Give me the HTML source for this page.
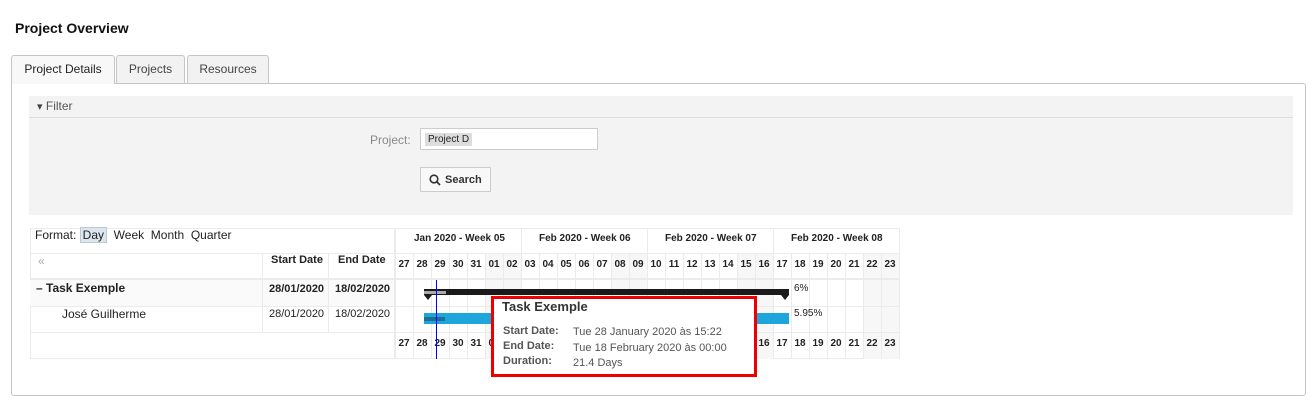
<!DOCTYPE html>
<html><head><meta charset="utf-8"><style>
body{margin:0;width:1316px;height:411px;background:#fff;font-family:"Liberation Sans",Arial,sans-serif;position:relative;overflow:hidden;color:#222}
.a{position:absolute}
.tab{position:absolute;top:55px;height:28px;border:1px solid #c5c5c5;border-bottom:none;border-radius:3px 3px 0 0;background:#f2f2f2;font-size:12px;color:#444;text-align:center;line-height:27px;box-sizing:border-box}
.d{position:absolute;width:18px;text-align:center;font-size:10px;font-weight:bold;color:#222}
.vl{position:absolute;width:1px;background:#ebebeb}
.hl{position:absolute;height:1px;background:#ebebeb}
.we{position:absolute;width:36px;background:#f7f7f7}
</style></head><body>
<div class="a" style="left:15px;top:20px;font-size:14px;font-weight:bold;color:#111">Project Overview</div>
<div class="a" style="left:11px;top:83px;width:1293px;height:311px;border:1px solid #c5c5c5;border-radius:0 3px 3px 3px"></div>
<div class="tab" style="left:11px;width:104px;height:29px;background:#f8f8f8;color:#222">Project Details</div>
<div class="tab" style="left:116px;width:69px">Projects</div>
<div class="tab" style="left:187px;width:82px">Resources</div>
<div class="a" style="left:29px;top:96px;width:1264px;height:119px;background:#f3f3f3"></div>
<div class="a" style="left:29px;top:117px;width:1264px;height:1px;background:#ddd"></div>
<div class="a" style="left:37px;top:99px;font-size:12px;color:#555"><span style="font-size:11px;color:#444">▾</span> Filter</div>
<div class="a" style="left:370px;top:133px;font-size:12px;color:#888">Project:</div>
<div class="a" style="left:420px;top:128px;width:176px;height:20px;border:1px solid #ccc;background:#fff"><span style="position:absolute;left:4px;top:4px;background:#ddd;font-size:10px;padding:1px 3px;color:#222">Project D</span></div>
<div class="a" style="left:420px;top:167px;width:69px;height:23px;border:1px solid #ccc;background:#f8f8f8;font-size:11px;font-weight:bold;line-height:24px;color:#333"><svg width="12" height="12" style="position:absolute;left:8px;top:6px"><circle cx="5" cy="5" r="3.8" fill="none" stroke="#333" stroke-width="1.6"/><line x1="7.6" y1="7.6" x2="11" y2="11" stroke="#333" stroke-width="1.8"/></svg><span style="position:absolute;left:24px">Search</span></div>

<div class="a" style="left:30px;top:228px;width:870px;height:131px;border:1px solid #ebebeb;box-sizing:border-box"></div>
<div class="a" style="left:30px;top:280px;width:365px;height:26px;background:#fafafa"></div>
<div class="we" style="left:485px;top:253px;height:106px"></div>
<div class="we" style="left:611px;top:253px;height:106px"></div>
<div class="we" style="left:737px;top:253px;height:106px"></div>
<div class="we" style="left:863px;top:253px;height:106px"></div>
<div class="hl" style="left:30px;top:253px;width:870px"></div>
<div class="hl" style="left:30px;top:278px;width:870px;height:2px"></div>
<div class="hl" style="left:30px;top:306px;width:870px"></div>
<div class="hl" style="left:30px;top:332px;width:870px"></div>
<div class="vl" style="left:262px;top:253px;height:79px"></div>
<div class="vl" style="left:328px;top:253px;height:79px"></div>
<div class="vl" style="left:394px;top:228px;height:131px;width:2px"></div>
<div class="vl" style="left:521px;top:228px;height:25px"></div>
<div class="vl" style="left:647px;top:228px;height:25px"></div>
<div class="vl" style="left:773px;top:228px;height:25px"></div>
<div id="cols"></div>
<div class="a" style="left:35px;top:228px;font-size:12px;color:#222">Format: <span style="background:#dde6f0;border:1px solid #bcc;padding:0 2px">Day</span>&nbsp; Week&nbsp; Month&nbsp; Quarter</div>
<div class="a" style="left:38px;top:254px;font-size:12px;color:#aaa">«</div>
<div class="a" style="left:271px;top:254px;font-size:11px;font-weight:bold">Start Date</div>
<div class="a" style="left:338px;top:254px;font-size:11px;font-weight:bold">End Date</div>
<div class="a" style="left:36px;top:281px;font-size:12px;font-weight:bold">– Task Exemple</div>
<div class="a" style="left:269px;top:283px;font-size:11px;font-weight:bold">28/01/2020</div>
<div class="a" style="left:335px;top:283px;font-size:11px;font-weight:bold">18/02/2020</div>
<div class="a" style="left:62px;top:307px;font-size:12px">José Guilherme</div>
<div class="a" style="left:269px;top:308px;font-size:11px">28/01/2020</div>
<div class="a" style="left:335px;top:308px;font-size:11px">18/02/2020</div>
<div class="a" style="left:414px;top:233px;font-size:10px;font-weight:bold">Jan 2020 - Week 05</div>
<div class="a" style="left:539px;top:233px;font-size:10px;font-weight:bold">Feb 2020 - Week 06</div>
<div class="a" style="left:665px;top:233px;font-size:10px;font-weight:bold">Feb 2020 - Week 07</div>
<div class="a" style="left:791px;top:233px;font-size:10px;font-weight:bold">Feb 2020 - Week 08</div>
<script>
var d=["27","28","29","30","31","01","02","03","04","05","06","07","08","09","10","11","12","13","14","15","16","17","18","19","20","21","22","23"],h="";
for(var i=0;i<28;i++){var x=395+i*18;h+='<div class="vl" style="left:'+(x+18)+'px;top:253px;height:106px"></div><div class="d" style="left:'+x+'px;top:259px">'+d[i]+'</div><div class="d" style="left:'+x+'px;top:338px">'+d[i]+'</div>';}
document.getElementById("cols").innerHTML=h;
</script>
<div class="a" style="left:424px;top:289px;width:365px;height:6px;background:#1a1a1a"></div>
<div class="a" style="left:424px;top:291px;width:22px;height:3px;background:#aaa"></div>
<div class="a" style="left:424px;top:295px;border:4px solid transparent;border-top:5px solid #1a1a1a;border-bottom:0"></div>
<div class="a" style="left:781px;top:295px;border:4px solid transparent;border-top:5px solid #1a1a1a;border-bottom:0"></div>
<div class="a" style="left:794px;top:283px;font-size:10px">6%</div>
<div class="a" style="left:424px;top:313px;width:365px;height:11px;background:#1ea5db"></div>
<div class="a" style="left:424px;top:317px;width:21px;height:4px;background:#1a6f94"></div>
<div class="a" style="left:794px;top:308px;font-size:10px">5.95%</div>
<div class="a" style="left:436px;top:280px;width:1px;height:79px;background:#00f"></div>
<div class="a" style="left:491px;top:296px;width:266px;height:81px;border:3px solid #e00;box-sizing:border-box;background:#fff"></div>
<div class="a" style="left:502px;top:299px;font-size:13px;font-weight:bold;color:#333">Task Exemple</div>
<div class="a" style="left:503px;top:324px;font-size:11px;font-weight:bold;color:#555;line-height:15px">Start Date:<br>End Date:<br>Duration:</div>
<div class="a" style="left:573px;top:325px;font-size:11px;color:#555;line-height:15.5px">Tue 28 January 2020 às 15:22<br>Tue 18 February 2020 às 00:00<br>21.4 Days</div>
</body></html>
